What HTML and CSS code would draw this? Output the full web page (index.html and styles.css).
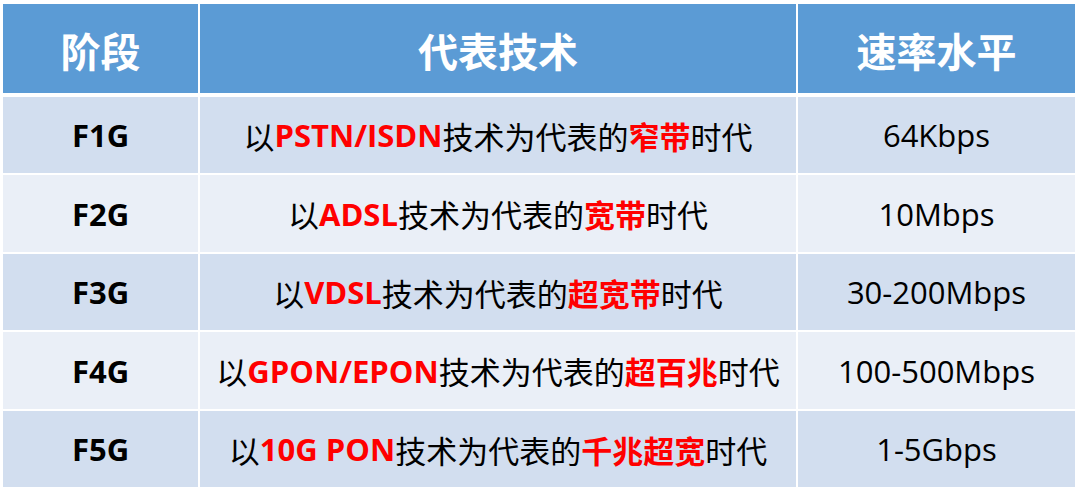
FILE: index.html
```html
<!DOCTYPE html>
<html lang="zh-CN">
<head>
<meta charset="utf-8">
<link rel="stylesheet" href="styles.css">
</head>
<body>
<div class="table">
  <div class="cell head">阶段</div>
  <div class="cell head">代表技术</div>
  <div class="cell head">速率水平</div>

  <div class="cell odd stage">F1G</div>
  <div class="cell odd tech">以<b class="hl">PSTN/ISDN</b>技术为代表的<b class="hl">窄带</b>时代</div>
  <div class="cell odd rate">64Kbps</div>

  <div class="cell even stage">F2G</div>
  <div class="cell even tech">以<b class="hl">ADSL</b>技术为代表的<b class="hl">宽带</b>时代</div>
  <div class="cell even rate">10Mbps</div>

  <div class="cell odd stage">F3G</div>
  <div class="cell odd tech">以<b class="hl">VDSL</b>技术为代表的<b class="hl">超宽带</b>时代</div>
  <div class="cell odd rate">30-200Mbps</div>

  <div class="cell even stage">F4G</div>
  <div class="cell even tech">以<b class="hl">GPON/EPON</b>技术为代表的<b class="hl">超百兆</b>时代</div>
  <div class="cell even rate">100-500Mbps</div>

  <div class="cell odd stage">F5G</div>
  <div class="cell odd tech">以<b class="hl">10G PON</b>技术为代表的<b class="hl">千兆超宽</b>时代</div>
  <div class="cell odd rate">1-5Gbps</div>
</div>
</body>
</html>
```

FILE: styles.css
```css
html, body {
  margin: 0;
  padding: 0;
  background: #ffffff;
}

body {
  width: 1080px;
  height: 492px;
  overflow: hidden;
  font-family: "Open Sans", "Noto Sans CJK SC", sans-serif;
}

.table {
  display: grid;
  grid-template-columns: 195px 596px 277px;
  grid-template-rows: 91px 76px 77px 76px 77px 76px;
  gap: 2px;
  padding: 4px 0 0 3px;
}

.cell {
  display: flex;
  align-items: center;
  justify-content: center;
  white-space: nowrap;
  color: #000000;
  font-size: 31px;
}

.head {
  background: #5b9bd5;
  color: #ffffff;
  font-weight: 700;
  font-size: 40px;
  margin-bottom: 2px;
  padding-top: 2px;
  font-family: "Noto Sans CJK SC", sans-serif;
}

.odd {
  background: #d2deef;
}

.even {
  background: #eaeff7;
}

.stage {
  font-weight: 700;
}

.tech {
  font-family: "Open Sans", "Noto Sans CJK SC", sans-serif;
}

.hl {
  color: #ff0000;
  font-weight: 700;
}
```
